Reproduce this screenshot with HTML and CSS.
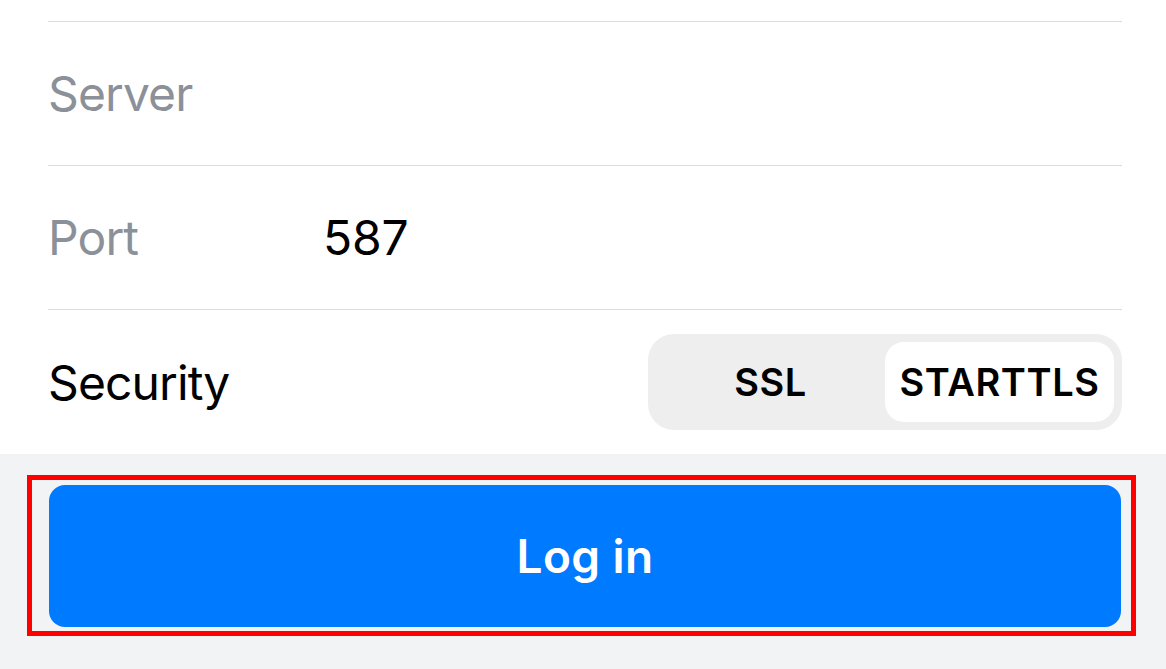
FILE: index.html
```html
<!DOCTYPE html>
<html lang="en">
<head>
<meta charset="utf-8">
<title>SMTP settings</title>
<link rel="stylesheet" href="styles.css">
</head>
<body>
<main class="screen">
  <section class="form">
    <div class="row">
      <span class="label muted">Server</span>
      <span class="value"></span>
    </div>
    <div class="row">
      <span class="label muted">Port</span>
      <span class="value">587</span>
    </div>
    <div class="row security">
      <span class="label">Security</span>
      <div class="segmented">
        <button class="segment">SSL</button>
        <button class="segment active">STARTTLS</button>
      </div>
    </div>
  </section>
  <footer class="footer">
    <div class="action">
      <button class="login">Log in</button>
      <div class="highlight"></div>
    </div>
  </footer>
</main>
</body>
</html>
```

FILE: styles.css
```css
* { box-sizing: border-box; }

html, body {
  margin: 0;
  padding: 0;
  height: 100%;
}

body {
  font-family: Inter, "Noto Sans", "Liberation Sans", sans-serif;
  background: #f2f3f5;
  color: #000;
  -webkit-font-smoothing: antialiased;
}

.screen {
  display: flex;
  flex-direction: column;
  min-height: 100%;
}

.form {
  background: #fff;
  padding: 21px 44px 0 48px;
}

.row {
  display: flex;
  align-items: center;
  height: 144px;
  border-top: 1px solid #dcdcde;
  font-size: 48px;
}

.row.security {
  height: 145px;
  justify-content: space-between;
}

.label {
  width: 275px;
  flex: none;
  letter-spacing: -0.9px;
}

.muted {
  color: #8b9099;
}

.value {
  color: #000;
  letter-spacing: -0.2px;
}

.segmented {
  display: grid;
  grid-template-columns: 1fr 1fr;
  width: 474px;
  height: 96px;
  padding: 8px;
  border-radius: 26px;
  background: #eeeeef;
}

.segment {
  border: 0;
  background: transparent;
  font-family: inherit;
  font-size: 38px;
  font-weight: 600;
  letter-spacing: 0.6px;
  color: #000;
  border-radius: 19px;
  padding: 0;
}

.segment.active {
  background: #fff;
}

.footer {
  flex: 1;
  padding: 31px 45px 0 49px;
}

.action {
  position: relative;
}

.login {
  display: block;
  width: 100%;
  height: 142px;
  border: 0;
  border-radius: 16px;
  background: #007aff;
  color: #fff;
  font-family: inherit;
  font-size: 46px;
  font-weight: 600;
  letter-spacing: 0.4px;
  padding: 0;
}

.highlight {
  position: absolute;
  left: -22px;
  right: -15px;
  top: -10px;
  bottom: -9px;
  border: 5px solid #ff0000;
  pointer-events: none;
}
```
